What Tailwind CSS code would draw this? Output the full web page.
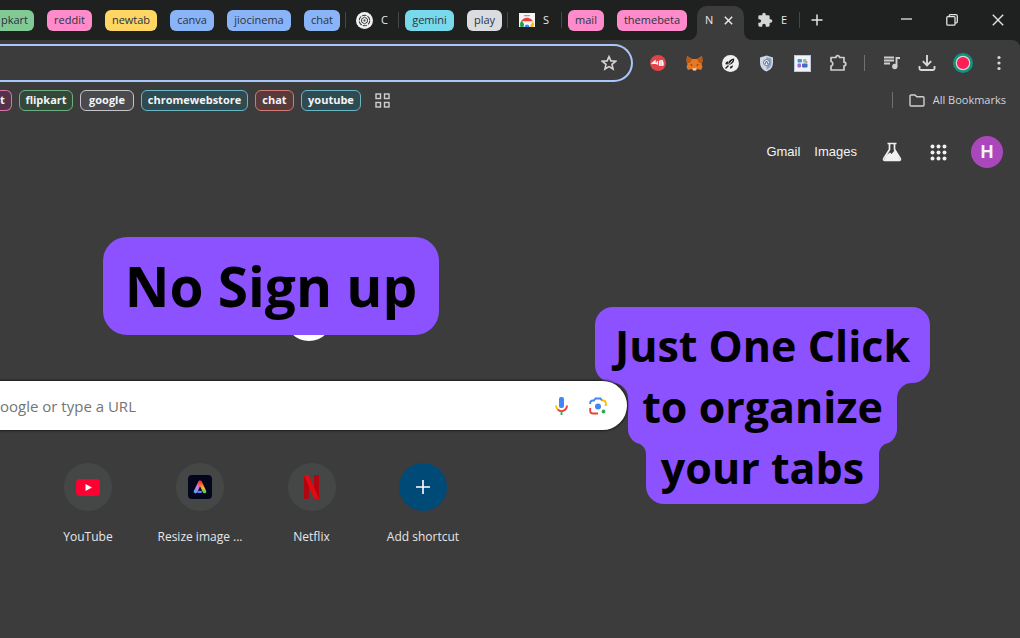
<!DOCTYPE html>
<html lang="en">
<head>
   <meta charset="UTF-8">
   <meta name="viewport" content="width=device-width, initial-scale=1.0">
   <title>New Tab</title>

   <!-- Tailwind CSS CDN link -->
   <script src="https://cdn.jsdelivr.net/npm/@tailwindcss/browser@4"></script>
</head>
<body class="relative min-h-screen overflow-x-hidden bg-[#3c3c3c] text-gray-200 font-['Open_Sans','Noto_Sans',sans-serif]">

<!-- Tab strip -->
<header class="bg-[#1f2020]">
   <div class="flex h-10 items-center text-[11px]">
      <div class="flex items-center gap-[13px] text-[#2b3340]">
         <button class="h-[21px] w-[34px] rounded-r-md bg-[#81c995] pr-1.5 text-right">pkart</button>
         <button class="h-[21px] w-[45px] rounded-md bg-[#ff8bcb]">reddit</button>
         <button class="h-[21px] w-[52px] rounded-md bg-[#fdd663]">newtab</button>
         <button class="h-[21px] w-[44px] rounded-md bg-[#8ab4f8]">canva</button>
         <button class="h-[21px] w-[64px] rounded-md bg-[#8ab4f8]">jiocinema</button>
         <button class="h-[21px] w-[36px] rounded-md bg-[#8ab4f8]">chat</button>
      </div>

      <button class="ml-[5px] flex h-4 w-[54px] items-center gap-2 border-x border-[#454746] pl-2.5">
         <svg class="size-[17px] shrink-0" viewBox="0 0 18 18" fill="none">
            <circle cx="9" cy="9" r="9" fill="#f1f1f1"/>
            <circle cx="9" cy="9" r="5.6" stroke="#333" stroke-width="1.1" stroke-dasharray="4.6 1.2"/>
            <path d="M9 5.500l3 1.750v3.500L9 12.500l-3-1.750v-3.500z" stroke="#333"/>
            <circle cx="9" cy="9" r="1.200" fill="#555"/>
         </svg>
         C
      </button>

      <div class="ml-1.5 flex items-center gap-[13px] text-[#2b3340]">
         <button class="h-[21px] w-[49px] rounded-md bg-[#78d9ec]">gemini</button>
         <button class="h-[21px] w-[35px] rounded-md bg-[#dadce0]">play</button>
      </div>

      <button class="ml-[5px] flex h-4 w-[55px] items-center gap-2 border-x border-[#454746] pl-[11px]">
         <svg class="size-4 shrink-0" viewBox="0 0 16 16">
            <rect y="1" width="16" height="14" fill="#f4f4f4"/>
            <rect x="5" y="3" width="6" height="1.200" rx=".6" fill="#9aa0a6"/>
            <path d="M1.500 15a6.500 6.500 0 0 1 1.200-6.500L5 12v3z" fill="#1e9e4a"/>
            <path d="M2.200 9.200a6.500 6.500 0 0 1 11.600 0z" fill="#ea4335"/>
            <path d="M14.200 9.400A6.500 6.500 0 0 1 14.500 15H10z" fill="#fbbc04"/>
            <path d="M4.500 15a3.500 3.500 0 0 1 7 0z" fill="#fff"/>
            <path d="M5.500 15a2.500 2.500 0 0 1 5 0z" fill="#4285f4"/>
         </svg>
         S
      </button>

      <div class="ml-1.5 flex items-center gap-[13px] text-[#2b3340]">
         <button class="h-[21px] w-[36px] rounded-md bg-[#ff8bcb]">mail</button>
         <button class="h-[21px] w-[70px] rounded-md bg-[#ff8bcb]">themebeta</button>
      </div>

      <!-- Active tab -->
      <div class="ml-0.5 flex items-end self-end text-[#3c3c3c]">
         <svg class="size-2" viewBox="0 0 8 8"><path d="M8 0v8H0a8 8 0 0 0 8-8z" fill="currentColor"/></svg>
         <div class="flex h-[34px] w-[47px] items-center justify-between rounded-t-[10px] bg-[#3c3c3c] pr-[11px] pb-1.5 pl-2 text-gray-200">
            <span>N</span>
            <button aria-label="Close tab">
               <svg class="size-[9px]" viewBox="0 0 9 9" stroke="#e8e8e8" stroke-width="1.500"><path d="M.8.8l7.400 7.400M8.200.8L.8 8.200"/></svg>
            </button>
         </div>
         <svg class="size-2" viewBox="0 0 8 8"><path d="M0 0v8h8a8 8 0 0 1-8-8z" fill="currentColor"/></svg>
      </div>

      <button class="flex h-4 w-[48px] items-center gap-2 border-r border-[#454746] pl-[5px]">
         <svg class="size-4 shrink-0" viewBox="0 0 24 24" fill="#d5d7d6"><path d="M20.500 11H19V7a2 2 0 0 0-2-2h-4V3.500a2.500 2.500 0 0 0-5 0V5H4a2 2 0 0 0-2 2v3.800h1.500a2.700 2.700 0 0 1 0 5.400H2V20a2 2 0 0 0 2 2h3.800v-1.500a2.700 2.700 0 0 1 5.400 0V22H17a2 2 0 0 0 2-2v-4h1.500a2.500 2.500 0 0 0 0-5z"/></svg>
         E
      </button>
      <button class="ml-[11px]" aria-label="New tab">
         <svg class="size-3" viewBox="0 0 12 12" stroke="#e3e3e3" stroke-width="1.500"><path d="M6 .5v11M.5 6h11"/></svg>
      </button>

      <!-- Window controls -->
      <div class="ml-auto flex items-center gap-[34px] pr-4">
         <button aria-label="Minimize"><svg class="h-3 w-[11px]" viewBox="0 0 11 12" stroke="#e3e3e3" stroke-width="1.300"><path d="M0 5h11"/></svg></button>
         <button aria-label="Restore"><svg class="size-3" viewBox="0 0 12 12" fill="none" stroke="#e3e3e3" stroke-width="1.300"><rect x=".8" y="2.600" width="8.200" height="8.600" rx="1"/><path d="M3.200 2.600V1.700a1 1 0 0 1 1-1h5.600a1.500 1.500 0 0 1 1.500 1.500v5.600a1 1 0 0 1-1 1H9"/></svg></button>
         <button aria-label="Close"><svg class="size-3" viewBox="0 0 12 12" stroke="#e3e3e3" stroke-width="1.400"><path d="M.8.8l10.400 10.400M11.200.8L.8 11.200"/></svg></button>
      </div>
   </div>

   <!-- Toolbar -->
   <div class="flex items-center rounded-tr-lg bg-[#3c3c3c] pt-1 pr-[3px]">
      <form class="mr-[7px] flex h-[38px] flex-1 items-center rounded-r-full border-2 border-l-0 border-[#a8c7fa] pr-3.5">
         <input type="text" aria-label="Address" class="h-full min-w-0 flex-1 px-3 text-sm outline-none">
         <button type="button" aria-label="Bookmark this tab">
            <svg class="size-4" viewBox="0 0 16 16" fill="none" stroke="#d5d5d5" stroke-width="1.600"><path d="M8 1.600l1.900 4.300 4.700.4-3.600 3.100 1.100 4.600L8 11.600 3.900 14 5 9.400 1.400 6.300l4.700-.4z"/></svg>
         </button>
      </form>
      <button class="grid w-9 place-items-center" aria-label="Ad blocker">
         <svg class="size-4" viewBox="0 0 16 16"><circle cx="8" cy="8" r="8" fill="#e0444b"/><path d="M1.500 9l3.500-3v3M3 8.300h5M7.300 6.300v3.500M9.500 6v4h3.500V8H9.500M9.500 6h3v2" fill="none" stroke="#fff" stroke-width="1.300"/></svg>
      </button>
      <button class="grid w-9 place-items-center" aria-label="Wallet">
         <svg class="size-[17px]" viewBox="0 0 17 17"><path d="M1 1l5 3h5l5-3 .6 5-1.100 3 1 3-1.500 3-3.500-1-1.500 1.500H7L5.500 14 2 15 .5 12l1-3L.4 6z" fill="#e8771f"/><path d="M1 1l5 3-2 4H1.500L.4 6zM16 1l-5 3 2 4h2.500l1.100-2z" fill="#b85a16"/><path d="M4 9l2.500 1-.5 1zM13 9l-2.500 1 .5 1z" fill="#3a2a20"/><path d="M6.500 13h4l-.8 2.500H7.300z" fill="#d9c8bd"/></svg>
      </button>
      <button class="grid w-9 place-items-center" aria-label="Feather">
         <svg class="size-[17px]" viewBox="0 0 17 17"><circle cx="8.500" cy="8.500" r="8.500" fill="#f0f0f0"/><path d="M6.500 9.500c-1-2.500 1.500-5.500 5.500-6 .8 2.500-1.200 5.500-4.200 6.200z" fill="#222"/><path d="M3.300 9.200c.3-2 1.500-2.900 3-2.900l-.6 3.200zM8 11.800l3-1.500c0 2-1 3.100-2.800 3.500z" fill="#222"/><path d="M3.500 13.500l3-3" stroke="#222" stroke-width="1.500"/><path d="M7 9.500l3.500-4" stroke="#f0f0f0"/></svg>
      </button>
      <button class="grid w-9 place-items-center" aria-label="Shield">
         <svg class="size-[17px]" viewBox="0 0 17 17"><path d="M8.500.5L15 2.500v5c0 4.500-2.500 7.500-6.500 9-4-1.500-6.500-4.500-6.500-9v-5z" fill="#cfd8e3"/><path d="M8.500 2l5 1.500v4c0 3.500-2 6-5 7.300z" fill="#8fa3bb"/><circle cx="8.500" cy="7.500" r="3" fill="#e6edf5" stroke="#5d7796"/><path d="M7 9l1.500-3L10 9" fill="none" stroke="#4d6788"/></svg>
      </button>
      <button class="grid w-9 place-items-center" aria-label="Tab groups">
         <svg class="size-[17px]" viewBox="0 0 17 17"><rect x=".5" y=".5" width="16" height="16" fill="#f0f3f8" stroke="#b9c9dc"/><rect x="3.500" y="4" width="4.500" height="3.500" rx="1" fill="#4a90d9"/><rect x="9" y="4" width="3.500" height="3.500" rx="1" fill="#7cc7a8"/><rect x="3.500" y="8.500" width="3.500" height="4" rx="1" fill="#9b6ad6"/><rect x="8" y="8.500" width="5.500" height="4" rx="1" fill="#4468c9"/><rect x="11" y="6" width="2.500" height="2.500" rx="1" fill="#e98b8b"/></svg>
      </button>
      <button class="grid w-9 place-items-center" aria-label="Extensions">
         <svg class="size-[18px]" viewBox="0 0 18 18" fill="none" stroke="#cfcfcf" stroke-width="1.700"><path d="M2 3.500h5a1.800 1.800 0 0 1 3.600 0H15v4.700a1.800 1.800 0 0 1 0 3.600V16H2v-4a2.300 2.300 0 0 0 0-4.500z" stroke-linejoin="round"/></svg>
      </button>
      <span class="mx-2 h-4 w-px bg-[#707070]"></span>
      <button class="grid w-9 place-items-center" aria-label="Media">
         <svg class="size-[17px]" viewBox="0 0 17 17" fill="none" stroke="#cfcfcf" stroke-width="1.900"><path d="M1 2.500h10M1 5.500h10M1 8.500h6"/><path d="M13.500 11.500V3H17"/><circle cx="11.800" cy="11.500" r="1.700" fill="#cfcfcf"/></svg>
      </button>
      <button class="grid w-9 place-items-center" aria-label="Downloads">
         <svg class="size-[18px]" viewBox="0 0 18 18" fill="none" stroke="#d8d8d8" stroke-width="1.900"><path d="M9 1v10M4.800 7.200L9 11.400l4.200-4.200M1.500 12v2.500a1.500 1.500 0 0 0 1.500 1.500h12a1.500 1.500 0 0 0 1.500-1.500V12"/></svg>
      </button>
      <button class="grid w-9 place-items-center" aria-label="Profile">
         <svg class="size-5" viewBox="0 0 20 20"><circle cx="10" cy="10" r="10" fill="#0f9382"/><circle cx="10" cy="10" r="6.700" fill="#fb1f55" stroke="#e0d5cf" stroke-width="1.200"/></svg>
      </button>
      <button class="grid w-9 place-items-center" aria-label="Menu">
         <svg class="h-4 w-1" viewBox="0 0 4 16" fill="#d8d8d8"><circle cx="2" cy="2.500" r="1.600"/><circle cx="2" cy="8" r="1.600"/><circle cx="2" cy="13.500" r="1.600"/></svg>
      </button>
   </div>
</header>

<!-- Bookmarks bar -->
<nav class="flex h-9 items-center gap-[7px] text-[11px] leading-4 font-bold text-gray-100">
   <button class="h-[21px] w-3 rounded-r-md border border-l-0 border-[#d873ab] bg-[#54324a] text-left">t</button>
   <button class="h-[21px] w-[54px] rounded-md border border-[#6fae80] bg-[#34483a]">flipkart</button>
   <button class="h-[21px] w-[54px] rounded-md border border-[#c4c4c8] bg-[#4a4a4e]">google</button>
   <button class="h-[21px] w-[107px] rounded-md border border-[#68b5c4] bg-[#2f4a50]">chromewebstore</button>
   <button class="h-[21px] w-[39px] rounded-md border border-[#cf7a75] bg-[#573a39]">chat</button>
   <button class="h-[21px] w-[60px] rounded-md border border-[#68b5c4] bg-[#2f4a50]">youtube</button>
   <button class="ml-[7px]" aria-label="Tab groups">
      <svg class="size-[15px]" viewBox="0 0 15 15" fill="none" stroke="#cfcfcf" stroke-width="1.400"><rect x="1" y="1" width="4.500" height="4.500"/><rect x="9.500" y="1" width="4.500" height="4.500"/><rect x="1" y="9.500" width="4.500" height="4.500"/><rect x="9.500" y="9.500" width="4.500" height="4.500"/></svg>
   </button>
   <button class="ml-auto flex items-center gap-2 border-l border-[#707070] pr-3.5 pl-4 font-normal text-gray-300">
      <svg class="h-[13px] w-4" viewBox="0 0 16 13" fill="none" stroke="#cfcfcf" stroke-width="1.400"><path d="M1 2a1 1 0 0 1 1-1h4l1.800 1.800H14a1 1 0 0 1 1 1V11a1 1 0 0 1-1 1H2a1 1 0 0 1-1-1z"/></svg>
      All Bookmarks
   </button>
</nav>

<!-- New tab page -->
<main>
   <div class="flex items-center justify-end pt-[18px] pr-[17px] text-[13px] text-gray-100 font-['Liberation_Sans',Arial,sans-serif]">
      <a href="#" class="mr-3.5">Gmail</a>
      <a href="#" class="mr-[25px]">Images</a>
      <button class="mr-7" aria-label="Search labs">
         <svg class="size-5" viewBox="0 0 20 20" fill="none" stroke="#f0f0f0" stroke-width="1.700"><path d="M5.500 1.500h9M7.500 2v5.500L1.800 16.500a1.200 1.200 0 0 0 1 1.900h14.400a1.200 1.200 0 0 0 1-1.900L12.500 7.500V2"/><path d="M4 13.500l4-3 1.500 1.500 4-4.500L18 18H2.500z" fill="#f0f0f0" stroke="none"/></svg>
      </button>
      <button class="mr-6" aria-label="Google apps">
         <svg class="size-[17px]" viewBox="0 0 17 17" fill="#f0f0f0"><circle cx="2.500" cy="2.500" r="2"/><circle cx="8.500" cy="2.500" r="2"/><circle cx="14.500" cy="2.500" r="2"/><circle cx="2.500" cy="8.500" r="2"/><circle cx="8.500" cy="8.500" r="2"/><circle cx="14.500" cy="8.500" r="2"/><circle cx="2.500" cy="14.500" r="2"/><circle cx="8.500" cy="14.500" r="2"/><circle cx="14.500" cy="14.500" r="2"/></svg>
      </button>
      <button class="size-8 rounded-full bg-[#ab47bc] text-lg font-bold" aria-label="Account">H</button>
   </div>

   <!-- Logo, the callout lies over its top -->
   <div class="mt-[133px] ml-[285px] size-12">
      <svg class="size-12" viewBox="0 0 48 48"><circle cx="24" cy="16" r="24" fill="#fff"/></svg>
   </div>

   <form class="relative z-20 mt-8 flex h-[49px] w-[627px] items-center rounded-r-full bg-white pr-5 shadow-[0_0_2px_1px_#1c1c1c]">
      <input type="text" aria-label="Search" placeholder="oogle or type a URL" class="min-w-0 flex-1 pt-0.5 text-[15px] text-gray-800 outline-none placeholder:text-[#757575]">
      <button type="button" class="mr-[21px]" aria-label="Search by voice">
         <svg class="h-[18px] w-[13px]" viewBox="0 0 13 18" fill="none" stroke-width="1.800"><rect x="4" y="0" width="5" height="11" rx="2" fill="#4285f4"/><path d="M1 8.500a5.500 5.500 0 0 0 1.700 4" stroke="#fbbc04"/><path d="M2.700 12.500a5.500 5.500 0 0 0 9.300-4" stroke="#ea4335"/><path d="M6.500 14v4" stroke="#34a853"/></svg>
      </button>
      <button type="button" aria-label="Search by image">
         <svg class="size-[18px]" viewBox="0 0 18 18" fill="none" stroke-width="1.900"><path d="M1.200 7V6a2.500 2.500 0 0 1 2.500-2.500H5L6.500 1.500h5L13 3.500" stroke="#4285f4"/><path d="M13 3.500h1.300A2.500 2.500 0 0 1 16.800 6v3" stroke="#fbbc04"/><path d="M1.200 11v2.700a2.800 2.800 0 0 0 2.800 2.800h5" stroke="#ea4335"/><circle cx="9" cy="9.500" r="3" fill="#4285f4"/><circle cx="14.500" cy="14.500" r="1.900" fill="#34a853"/></svg>
      </button>
   </form>

   <!-- Shortcuts -->
   <div class="mt-[33px] flex pl-8 text-xs">
      <a href="#" class="flex w-28 flex-col items-center gap-[18px]">
         <span class="grid size-12 place-items-center rounded-full bg-[#454746]">
            <svg class="h-[17px] w-6" viewBox="0 0 24 17"><rect width="24" height="17" rx="4" fill="#ff0033"/><path d="M9.500 5l6.500 3.500L9.500 12z" fill="#fff"/></svg>
         </span>
         YouTube
      </a>
      <a href="#" class="flex w-28 flex-col items-center gap-[18px]">
         <span class="grid size-12 place-items-center rounded-full bg-[#454746]">
            <svg class="size-6" viewBox="0 0 24 24">
               <defs>
                  <linearGradient id="leg-left" x1="0" y1="1" x2="1" y2="0"><stop offset="0" stop-color="#5aa2ff"/><stop offset=".45" stop-color="#d77bf0"/><stop offset="1" stop-color="#ff3b2f"/></linearGradient>
                  <linearGradient id="leg-right" x1="0" y1="0" x2="0" y2="1"><stop offset="0" stop-color="#ff3b2f"/><stop offset=".6" stop-color="#ffb52e"/><stop offset="1" stop-color="#5fd35a"/></linearGradient>
               </defs>
               <rect width="24" height="24" rx="4" fill="#04061c"/>
               <path d="M7.500 16.500L12 7.500" stroke="url(#leg-left)" stroke-width="3.600" stroke-linecap="round"/>
               <path d="M12.300 7.500l4.200 9" stroke="url(#leg-right)" stroke-width="3.600" stroke-linecap="round"/>
               <path d="M10 16.800h3" stroke="#5b7bff" stroke-width="2.200" stroke-linecap="round"/>
            </svg>
         </span>
         Resize image ...
      </a>
      <a href="#" class="flex w-[111px] flex-col items-center gap-[18px]">
         <span class="grid size-12 place-items-center rounded-full bg-[#454746]">
            <svg class="h-6 w-[15px]" viewBox="0 0 15 24"><path d="M0 0h5v23.500L0 24zM10 0h5v24l-5-.5z" fill="#b1060f"/><path d="M0 0h5l10 24-5-.5z" fill="#e50914"/></svg>
         </span>
         Netflix
      </a>
      <button class="flex w-28 flex-col items-center gap-[18px]">
         <span class="grid size-12 place-items-center rounded-full bg-[#004a77]">
            <svg class="size-3.5" viewBox="0 0 14 14" stroke="#fff" stroke-width="1.600"><path d="M7 0v14M0 7h14"/></svg>
         </span>
         Add shortcut
      </button>
   </div>
</main>

<!-- Callouts over the page -->
<div class="absolute top-[237px] left-[103px] z-10 flex h-[98px] w-[336px] items-center justify-center rounded-3xl bg-[#8c52ff] text-[55px] font-bold whitespace-nowrap text-black">No Sign up</div>

<div class="absolute top-[307px] left-[595px] z-10 w-[335px] pb-1.5 text-center text-[43px] leading-[61px] font-bold whitespace-nowrap text-black">
   <svg class="absolute inset-0 h-[197px] w-[335px]" viewBox="0 0 335 197" fill="#8c52ff"><path d="M18 0h299a18 18 0 0 1 18 18v40a18 18 0 0 1-18 18a15 15 0 0 0-15 15v31a15 15 0 0 1-12 15a12 12 0 0 0-6 11v31a18 18 0 0 1-18 18H69a18 18 0 0 1-18-18v-31a12 12 0 0 0-6-11a15 15 0 0 1-12-15V91a15 15 0 0 0-15-15A18 18 0 0 1 0 58V18A18 18 0 0 1 18 0z"/></svg>
   <p class="relative pt-2">Just One Click</p>
   <p class="relative">to organize</p>
   <p class="relative">your tabs</p>
</div>

</body>
</html>
